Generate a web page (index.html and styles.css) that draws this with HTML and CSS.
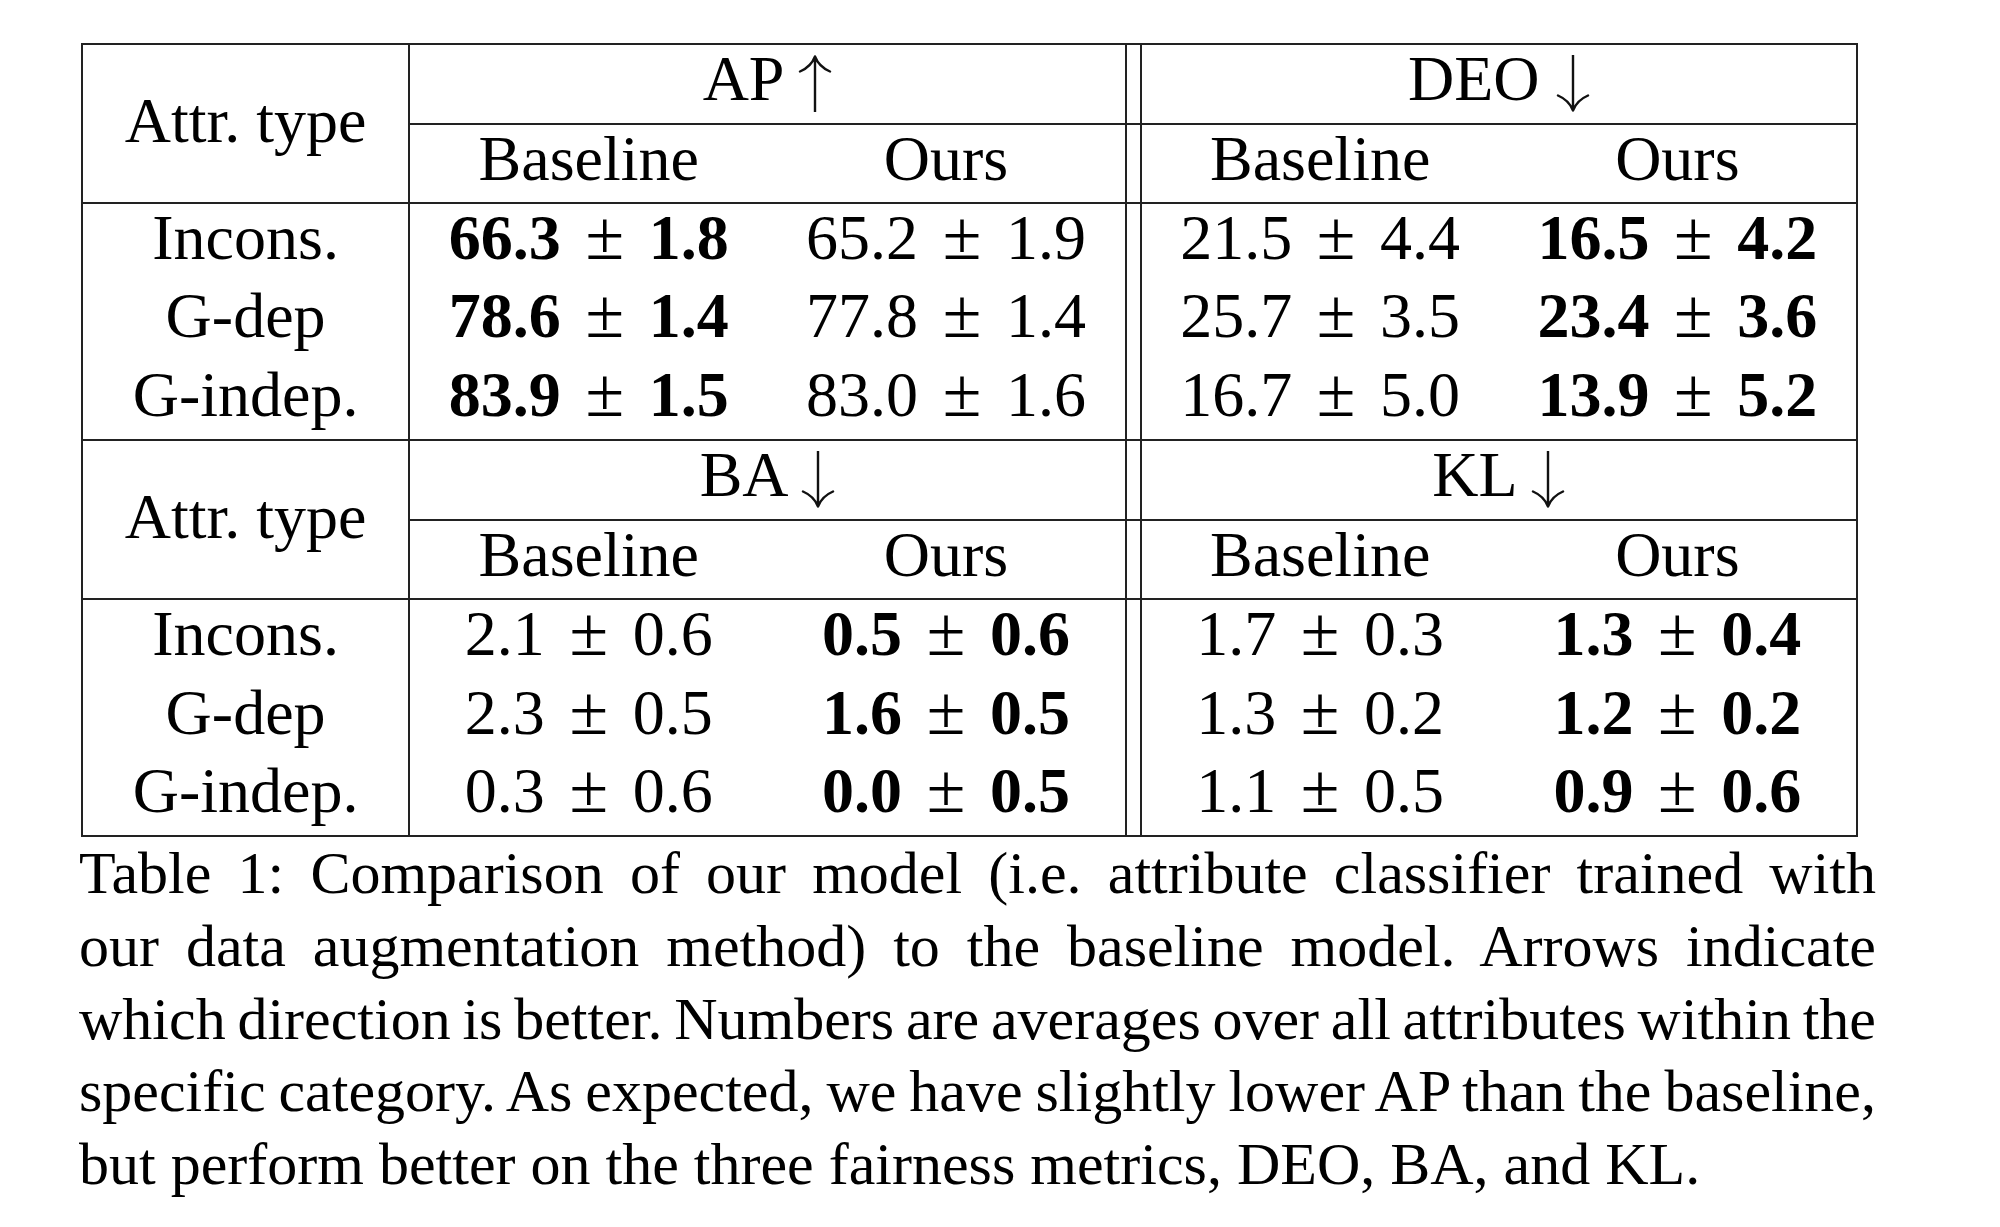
FILE: index.html
```html
<!DOCTYPE html>
<html lang="en">
<head>
<meta charset="utf-8">
<title>Table 1</title>
<link rel="stylesheet" href="styles.css">
</head>
<body>
<figure class="fig">
  <table class="results">
    <colgroup>
      <col class="c-attr"><col class="c-val"><col class="c-val"><col class="c-gap"><col class="c-val"><col class="c-val">
    </colgroup>
    <tbody>
      <tr class="h1">
        <th rowspan="2" class="attr">Attr. type</th>
        <th colspan="2" class="grp">AP <svg class="arr" viewBox="0 0 34 57" width="34" height="57" role="img" aria-label="higher is better"><path d="M17 3V57M17 1.5C14.5 8 9 13.5 2 16.5M17 1.5C19.5 8 25 13.5 32 16.5"/></svg></th>
        <td class="gap"></td>
        <th colspan="2" class="grp">DEO <svg class="arr" viewBox="0 0 34 57" width="34" height="57" role="img" aria-label="lower is better"><path d="M17 0V54M17 55.5C14.5 49 9 43.5 2 40.5M17 55.5C19.5 49 25 43.5 32 40.5"/></svg></th>
      </tr>
      <tr class="h2">
        <th>Baseline</th><th>Ours</th><td class="gap"></td><th>Baseline</th><th>Ours</th>
      </tr>
      <tr class="r">
        <td class="name">Incons.</td>
        <td><b>66.3</b><span class="pm">±</span><b>1.8</b></td>
        <td>65.2<span class="pm">±</span>1.9</td>
        <td class="gap"></td>
        <td>21.5<span class="pm">±</span>4.4</td>
        <td><b>16.5</b><span class="pm">±</span><b>4.2</b></td>
      </tr>
      <tr class="r">
        <td class="name">G-dep</td>
        <td><b>78.6</b><span class="pm">±</span><b>1.4</b></td>
        <td>77.8<span class="pm">±</span>1.4</td>
        <td class="gap"></td>
        <td>25.7<span class="pm">±</span>3.5</td>
        <td><b>23.4</b><span class="pm">±</span><b>3.6</b></td>
      </tr>
      <tr class="r last">
        <td class="name">G-indep.</td>
        <td><b>83.9</b><span class="pm">±</span><b>1.5</b></td>
        <td>83.0<span class="pm">±</span>1.6</td>
        <td class="gap"></td>
        <td>16.7<span class="pm">±</span>5.0</td>
        <td><b>13.9</b><span class="pm">±</span><b>5.2</b></td>
      </tr>
    </tbody>
    <tbody>
      <tr class="h1">
        <th rowspan="2" class="attr">Attr. type</th>
        <th colspan="2" class="grp">BA <svg class="arr" viewBox="0 0 34 57" width="34" height="57" role="img" aria-label="lower is better"><path d="M17 0V54M17 55.5C14.5 49 9 43.5 2 40.5M17 55.5C19.5 49 25 43.5 32 40.5"/></svg></th>
        <td class="gap"></td>
        <th colspan="2" class="grp">KL <svg class="arr" viewBox="0 0 34 57" width="34" height="57" role="img" aria-label="lower is better"><path d="M17 0V54M17 55.5C14.5 49 9 43.5 2 40.5M17 55.5C19.5 49 25 43.5 32 40.5"/></svg></th>
      </tr>
      <tr class="h2">
        <th>Baseline</th><th>Ours</th><td class="gap"></td><th>Baseline</th><th>Ours</th>
      </tr>
      <tr class="r">
        <td class="name">Incons.</td>
        <td>2.1<span class="pm">±</span>0.6</td>
        <td><b>0.5</b><span class="pm">±</span><b>0.6</b></td>
        <td class="gap"></td>
        <td>1.7<span class="pm">±</span>0.3</td>
        <td><b>1.3</b><span class="pm">±</span><b>0.4</b></td>
      </tr>
      <tr class="r">
        <td class="name">G-dep</td>
        <td>2.3<span class="pm">±</span>0.5</td>
        <td><b>1.6</b><span class="pm">±</span><b>0.5</b></td>
        <td class="gap"></td>
        <td>1.3<span class="pm">±</span>0.2</td>
        <td><b>1.2</b><span class="pm">±</span><b>0.2</b></td>
      </tr>
      <tr class="r last">
        <td class="name">G-indep.</td>
        <td>0.3<span class="pm">±</span>0.6</td>
        <td><b>0.0</b><span class="pm">±</span><b>0.5</b></td>
        <td class="gap"></td>
        <td>1.1<span class="pm">±</span>0.5</td>
        <td><b>0.9</b><span class="pm">±</span><b>0.6</b></td>
      </tr>
    </tbody>
  </table>
  <figcaption class="caption">
    <span class="ln">Table 1: Comparison of our model (i.e. attribute classifier trained with</span>
    <span class="ln">our data augmentation method) to the baseline model. Arrows indicate</span>
    <span class="ln">which direction is better. Numbers are averages over all attributes within the</span>
    <span class="ln">specific category. As expected, we have slightly lower AP than the baseline,</span>
    <span class="ln last">but perform better on the three fairness metrics, DEO, BA, and KL.</span>
  </figcaption>
</figure>
</body>
</html>
```

FILE: styles.css
```css
* {
  box-sizing: border-box;
}

html, body {
  margin: 0;
  padding: 0;
  background: #ffffff;
}

body {
  color: #000000;
  font-family: "Liberation Serif", "Times New Roman", serif;
}

.fig {
  margin: 0;
  padding: 43px 0 0 81px;
}

.results {
  border-collapse: collapse;
  table-layout: fixed;
  width: 1777px;
  font-size: 64px;
  line-height: 67px;
  border: 2px solid #222222;
}

.c-attr { width: 327px; }
.c-val { width: 358px; }
.c-gap { width: 15px; }

.results th,
.results td {
  padding: 0 0 11.4px;
  vertical-align: top;
  text-align: center;
  font-weight: normal;
  white-space: nowrap;
}

.results .h1 > * {
  padding-bottom: 11px;
}

.results .h2 > * {
  padding-bottom: 10px;
}

.results b {
  font-weight: bold;
}

.results .attr {
  vertical-align: middle;
  padding: 0 0 6px;
  border-right: 2px solid #222222;
  border-bottom: 2px solid #222222;
}

.results .name {
  border-right: 2px solid #222222;
}

.results .h1 > * {
  border-top: 2px solid #222222;
  border-bottom: 2px solid #222222;
}

.results .h2 > * {
  border-bottom: 2px solid #222222;
}

.results .gap {
  padding: 0;
  border-left: 2px solid #222222;
  border-right: 2px solid #222222;
}

.pm {
  font-size: 1.1em;
  line-height: 0;
  margin: 0 0.35em;
}

.arr {
  vertical-align: -12px;
  fill: none;
  stroke: #111111;
  stroke-width: 2.4;
  stroke-linecap: round;
}

.caption {
  margin: 0 0 0 -2px;
  width: 1797px;
  font-size: 60px;
  line-height: 72.7px;
}

.caption .ln {
  display: block;
  word-spacing: -0.08em;
  text-align: justify;
  text-align-last: justify;
}

.caption .ln.last {
  word-spacing: 0;
  text-align-last: left;
}
```
